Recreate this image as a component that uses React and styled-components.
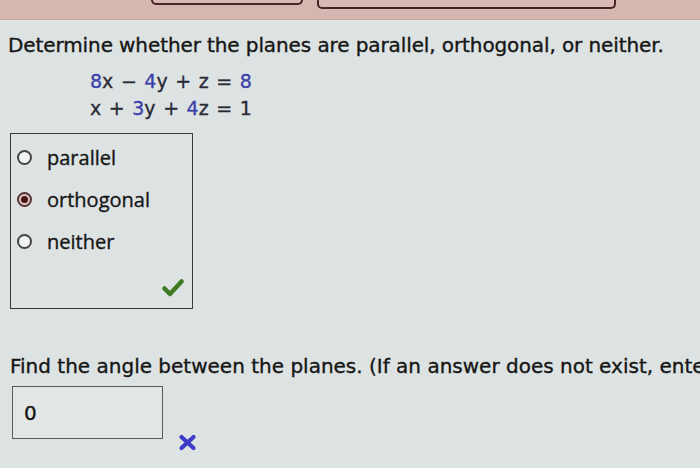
import React from 'react'
import styled, { createGlobalStyle } from 'styled-components'

const Global = createGlobalStyle`
  html, body { margin: 0; padding: 0; }
  body {
    width: 700px;
    height: 468px;
    overflow: hidden;
    background: #dde3e2;
    font-family: "DejaVu Sans", Verdana, sans-serif;
    color: #161616;
    -webkit-text-stroke: 0.35px currentColor;
  }
`

const Page = styled.div`
  width: 700px;
  height: 468px;
  display: flex;
  flex-direction: column;
  overflow: hidden;
`

const TopBar = styled.div`
  height: 20px;
  flex-shrink: 0;
  background: #d6b6b1;
  border-bottom: 1px solid #c4a9a5;
  box-sizing: border-box;
  display: flex;
  gap: 14px;
  padding-left: 151px;
`

const TopButton = styled.div`
  width: ${(p) => p.w}px;
  height: ${(p) => p.h}px;
  border: 2px solid #4a2424;
  border-top: none;
  border-radius: 0 0 5px 5px;
  background: #d9b9b4;
`

const Content = styled.div`
  padding: 13px 0 0 8px;
  display: flex;
  flex-direction: column;
`

const Question = styled.div`
  font-size: 20px;
  white-space: nowrap;
  line-height: 24px;
  letter-spacing: -0.1px;
`

const Equations = styled.div`
  margin: 11px 0 0 82px;
  font-size: 19px;
  line-height: 27px;
  word-spacing: 1.5px;
  color: #2a2a36;
`

const Num = styled.span`
  color: #3b3fa8;
`

const Choices = styled.div`
  margin: 11px 0 0 2px;
  width: 183px;
  height: 176px;
  border: 1.5px solid #3a3a3a;
  box-sizing: border-box;
  display: flex;
  flex-direction: column;
  padding: 2px 0 0 6px;
`

const Option = styled.label`
  display: flex;
  align-items: center;
  gap: 15px;
  height: 42px;
  font-family: "Open Sans", "DejaVu Sans", sans-serif;
  font-size: 20px;
`

const Radio = styled.span`
  width: 11px;
  height: 11px;
  border-radius: 50%;
  border: 2px solid ${(p) => (p.checked ? '#5a3434' : '#454545')};
  background: ${(p) => (p.checked ? '#dcc8c8' : '#f2f5f4')};
  display: flex;
  align-items: center;
  justify-content: center;
  flex-shrink: 0;

  &::after {
    content: '';
    width: 7px;
    height: 7px;
    border-radius: 50%;
    background: ${(p) => (p.checked ? '#4a1414' : 'transparent')};
  }
`

const CheckMark = styled.div`
  align-self: flex-end;
  margin: 16px 8px 0 0;
  display: flex;
`

const Second = styled.div`
  margin-top: 45px;
  padding-left: 2px;
  font-size: 20px;
  white-space: nowrap;
  line-height: 24px;
`

const AnswerRow = styled.div`
  margin-top: 8px;
  display: flex;
  align-items: flex-end;
  gap: 15px;
  padding-left: 4px;
`

const AnswerBox = styled.div`
  width: 151px;
  height: 53px;
  box-sizing: border-box;
  border: 1.5px solid #5a5a5a;
  background: #e2e7e6;
  font-size: 20px;
  display: flex;
  align-items: center;
  padding-left: 11px;
`

const Cross = styled.div`
  display: flex;
  margin-bottom: -12px;
`

export default function App() {
  return (
    <Page>
      <Global />
      <TopBar>
        <TopButton w={148} h={3} />
        <TopButton w={295} h={7} />
      </TopBar>
      <Content>
        <Question>Determine whether the planes are parallel, orthogonal, or neither.</Question>
        <Equations>
          <div>
            <Num>8</Num>x − <Num>4</Num>y + z = <Num>8</Num>
          </div>
          <div>
            x + <Num>3</Num>y + <Num>4</Num>z = 1
          </div>
        </Equations>
        <Choices>
          <Option><Radio />parallel</Option>
          <Option><Radio checked />orthogonal</Option>
          <Option><Radio />neither</Option>
          <CheckMark>
            <svg width="22" height="19" viewBox="0 0 22 19">
              <path d="M2.5 10.5 L8 16 L19.5 3.5" fill="none" stroke="#3f7a22" strokeWidth="4.5" strokeLinecap="round" strokeLinejoin="round" />
            </svg>
          </CheckMark>
        </Choices>
        <Second>Find the angle between the planes. (If an answer does not exist, enter DNE.)</Second>
        <AnswerRow>
          <AnswerBox>0</AnswerBox>
          <Cross>
            <svg width="19" height="17" viewBox="0 0 19 17">
              <path d="M3.5 3 L15.5 14 M15.5 3 L3.5 14" stroke="#3c3cc8" strokeWidth="4.2" strokeLinecap="round" />
            </svg>
          </Cross>
        </AnswerRow>
      </Content>
    </Page>
  )
}
